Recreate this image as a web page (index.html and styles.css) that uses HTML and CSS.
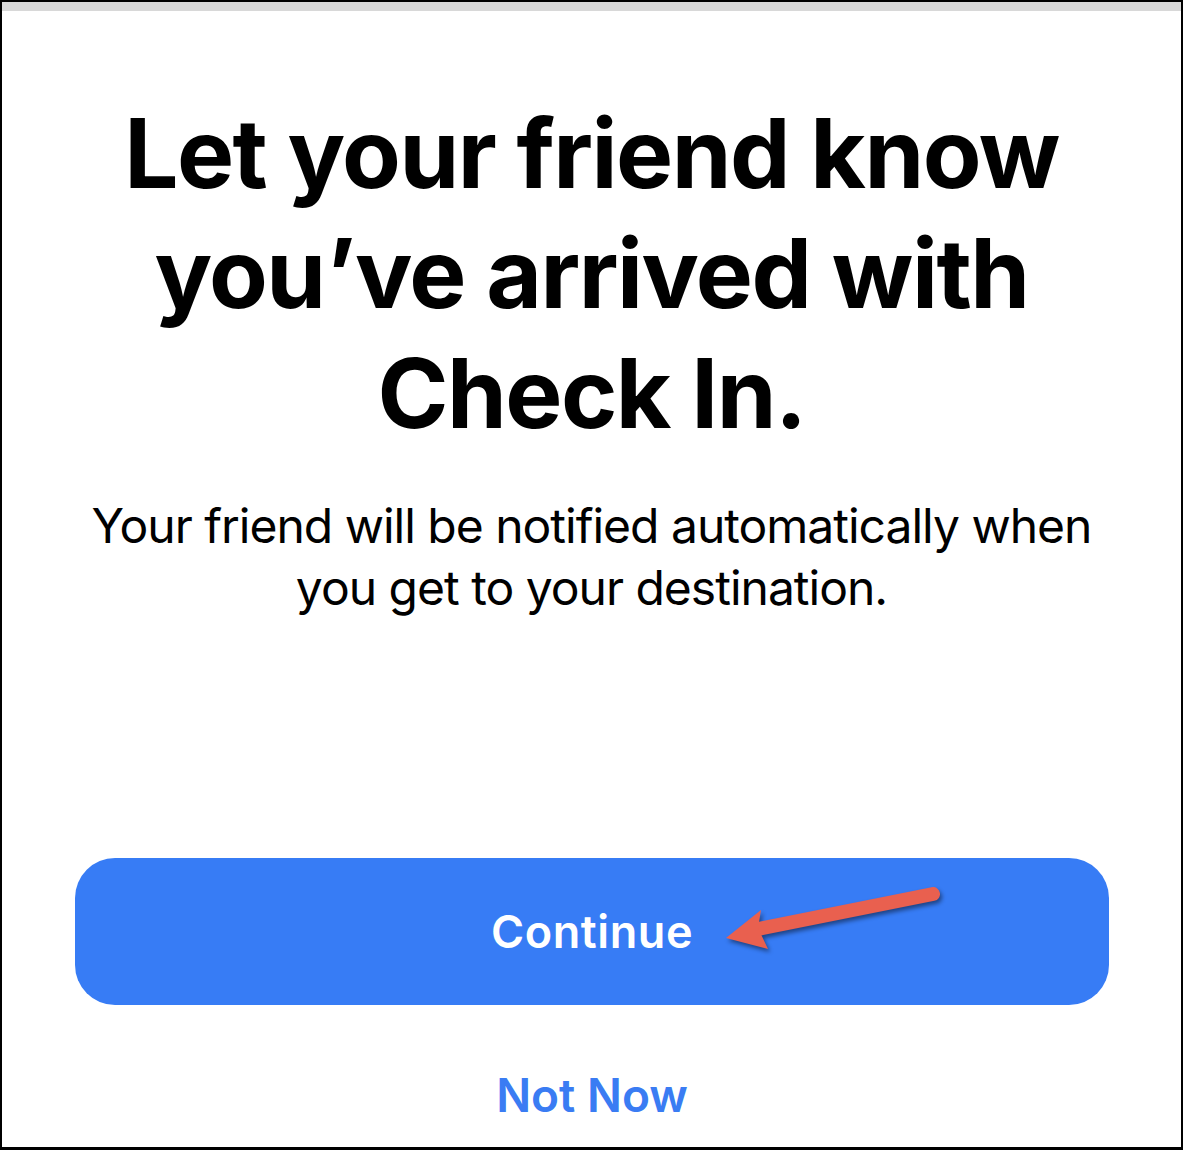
FILE: index.html
```html
<!DOCTYPE html>
<html lang="en">
<head>
<meta charset="utf-8">
<title>Check In</title>
<link rel="stylesheet" href="styles.css">
</head>
<body>
<div class="frame">
  <div class="topbar"></div>
  <main class="sheet">
    <h1 class="title">Let your friend know<br>you’ve arrived with<br>Check In.</h1>
    <p class="lede">Your friend will be notified automatically when<br>you get to your destination.</p>
    <div class="actions">
      <button class="btn-primary" type="button">Continue</button>
      <button class="btn-link" type="button">Not Now</button>
    </div>
  </main>
  <svg class="arrow" width="260" height="90" viewBox="0 0 260 90" aria-hidden="true">
    <line x1="58" y1="59" x2="233" y2="24" stroke="#e9604f" stroke-width="14" stroke-linecap="round"/>
    <polygon points="26,68 61,40 58,58 68,79" fill="#e9604f"/>
  </svg>
</div>
</body>
</html>
```
FILE: styles.css
```css
html, body {
  margin: 0;
  padding: 0;
  background: #ffffff;
}

.frame {
  position: relative;
  width: 1183px;
  height: 1150px;
  box-sizing: border-box;
  border-style: solid;
  border-color: #000000;
  border-width: 2px 2px 3px 2px;
  background: #ffffff;
  font-family: Inter, "Noto Sans", "Liberation Sans", sans-serif;
  color: #000000;
  overflow: hidden;
}

.topbar {
  height: 9px;
  background: #d8d8d8;
}

.sheet {
  display: flex;
  flex-direction: column;
  align-items: center;
}

.title {
  margin: 82px 0 0;
  font-size: 96px;
  font-weight: 700;
  line-height: 120px;
  letter-spacing: -1.5px;
  text-align: center;
}

.lede {
  margin: 42px 0 0;
  font-size: 48px;
  font-weight: 400;
  line-height: 62px;
  letter-spacing: -1px;
  text-align: center;
}

.actions {
  align-self: stretch;
  display: flex;
  flex-direction: column;
  align-items: center;
  margin-top: 239px;
  padding: 0 72px 0 73px;
}

.btn-primary {
  align-self: stretch;
  height: 147px;
  border: none;
  border-radius: 40px;
  background: #377cf5;
  color: #ffffff;
  font-family: inherit;
  font-size: 45px;
  font-weight: 600;
  letter-spacing: 0.6px;
  padding: 0;
}

.btn-link {
  margin-top: 63px;
  border: none;
  background: none;
  padding: 0;
  color: #3a7cf3;
  font-family: inherit;
  font-size: 46px;
  font-weight: 600;
  line-height: 54px;
}

.arrow {
  position: absolute;
  left: 698px;
  top: 868px;
  filter: drop-shadow(2px 3px 2px rgba(0, 0, 0, 0.45));
}
```
